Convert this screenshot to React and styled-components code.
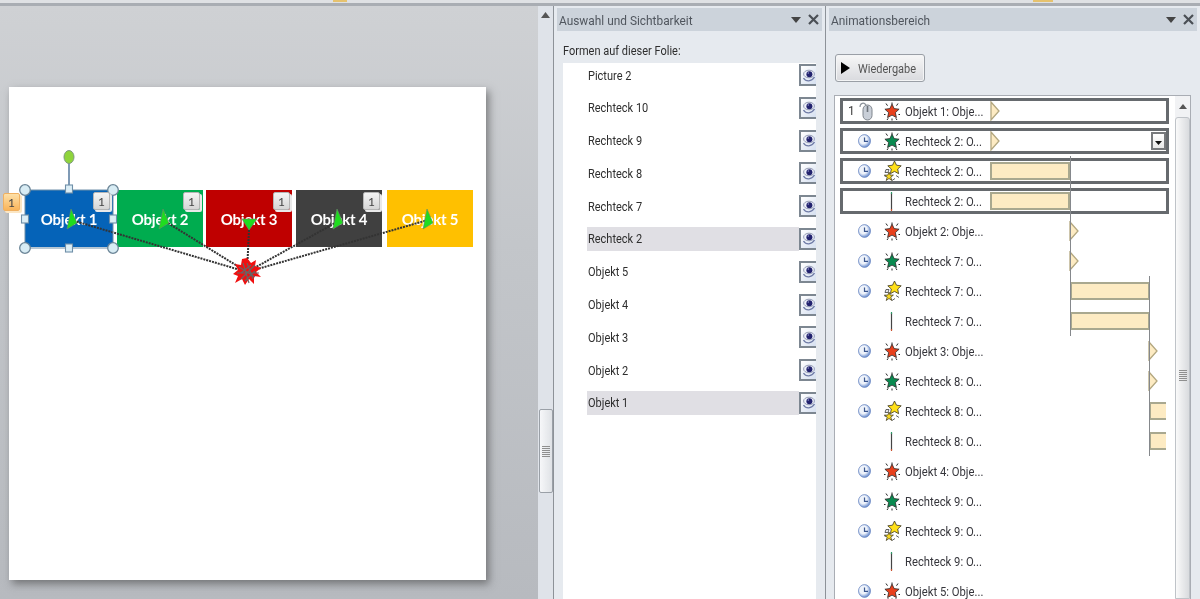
import React from 'react';
import styled, {createGlobalStyle} from 'styled-components';

const GlobalStyle = createGlobalStyle`
  * {
    box-sizing: border-box;
  }
  html, body {
    margin: 0;
    height: 100%;
    overflow: hidden;
    background: #e6eaef;
  }
  #root {
    width: 1200px;
    height: 599px;
  }
`;

const Page = styled.div`
  width: 1200px;
  height: 599px;
  display: flex;
  flex-direction: column;
  overflow: hidden;
  font-family: 'Roboto', 'Liberation Sans', sans-serif;
  color: #3a3a3a;
  filter: blur(0.45px);
`;

// the panes use a tall narrow face, so the text gets squeezed a little
const Narrow = styled.span`
  display: inline-block;
  white-space: nowrap;
  transform: scaleX(${p => p.$scale || 0.88});
  transform-origin: left center;
`;

const TopStrip = styled.div`
  position: relative;
  flex: 0 0 6px;
  background: linear-gradient(#dfe1e4 0, #dfe1e4 3px, #a9adb3 3px, #a9adb3 6px);
`;

const RibbonMark = styled.span`
  position: absolute;
  top: 0;
  left: ${p => p.$left}px;
  width: ${p => p.$width}px;
  height: 2px;
  background: #e6c26e;
`;

const Main = styled.div`
  flex: 1;
  display: flex;
  min-height: 0;
`;

const Workspace = styled.div`
  flex: 0 0 538px;
  padding: 81px 0 0 9px;
  background: linear-gradient(#cfd1d4 0, #c3c6ca 40%, #b7babf 100%);
`;

const Slide = styled.div`
  position: relative;
  width: 477px;
  height: 493px;
  background: #fff;
  box-shadow: 3px 4px 8px rgba(60, 60, 60, 0.55);
`;

const Shape = styled.div`
  position: absolute;
  top: 103px;
  left: ${p => p.$left}px;
  width: ${p => p.$width}px;
  height: 57px;
  display: flex;
  align-items: center;
  justify-content: center;
  background: ${p => p.$color};
  color: #fff;
  font-family: 'Lato', 'Liberation Sans', sans-serif;
  font-weight: 700;
  font-size: 15px;
  letter-spacing: -0.2px;
`;

const Badge = styled.span`
  position: absolute;
  top: ${p => p.$top}px;
  left: ${p => p.$left}px;
  width: 17px;
  height: 18px;
  display: flex;
  align-items: center;
  justify-content: center;
  border-radius: 2px;
  border: 1px solid ${p => (p.$orange ? '#f0b060' : '#b5b5b5')};
  background: ${p =>
    p.$orange
      ? 'linear-gradient(#fde0a8, #f9b45a)'
      : 'linear-gradient(#f4f4f4, #d6d6d6)'};
  box-shadow: 2px 2px 0 ${p => (p.$orange ? '#fbe6c4' : '#e9e9e9')};
  color: #444;
  font-family: 'Lato', 'Liberation Sans', sans-serif;
  font-size: 12px;
`;

const SlideOverlay = styled.svg`
  position: absolute;
  top: 0;
  left: 0;
`;

const ScrollStrip = styled.div`
  flex: 0 0 16px;
  display: flex;
  flex-direction: column;
  align-items: center;
  background: #dfe3e9;
  border-right: 1px solid #8d9298;
`;

const ArrowBtn = styled.div`
  height: 18px;
  display: flex;
  align-items: center;
  justify-content: center;
`;

const StripThumb = styled.div`
  margin-top: 385px;
  width: 14px;
  height: 84px;
  display: flex;
  align-items: center;
  justify-content: center;
  border: 1px solid #9aa0a7;
  border-radius: 2px;
  background: linear-gradient(90deg, #f6f7f9, #dfe2e6);
`;

const Grip = styled.div`
  width: 8px;
  height: 11px;
  background: repeating-linear-gradient(#8f8f8f 0, #8f8f8f 1px, transparent 1px, transparent 2px);
`;

const Pane = styled.section`
  flex: 0 0 ${p => p.$width}px;
  display: flex;
  flex-direction: column;
  min-width: 0;
  background: #e6eaef;
  border-right: ${p => (p.$divided ? '1px solid #8d9298' : 'none')};
`;

const PaneHeader = styled.header`
  flex: 0 0 23px;
  margin: 2px 3px 0 3px;
  padding: 0 3px 0 2px;
  display: flex;
  align-items: center;
  justify-content: space-between;
  background: #ccd3db;
  font-size: 13.5px;
  color: #50565e;
`;

const HeaderActions = styled.div`
  display: flex;
  align-items: center;
  gap: 7px;
`;

const Caption = styled.div`
  height: 32px;
  padding: 11px 0 0 9px;
  font-size: 12.5px;
  color: #2e2e2e;
  line-height: 18px;
`;

const ShapeList = styled.ul`
  flex: 1;
  list-style: none;
  margin: 0 9px;
  padding: 0;
  background: #fff;
`;

const ShapeRow = styled.li`
  height: 24px;
  margin-bottom: 8.8px;
  display: flex;
  align-items: center;
  justify-content: flex-end;
  padding-left: 24px;
`;

const ShapeName = styled.div`
  flex: 1;
  height: 24px;
  display: flex;
  align-items: center;
  padding-left: 1px;
  background: ${p => (p.$selected ? '#e0dfe4' : 'transparent')};
  font-size: 12.5px;
  color: #2e2e2e;
`;

const EyeButton = styled.button`
  flex: 0 0 17px;
  width: 17px;
  height: 22px;
  padding: 0;
  display: flex;
  align-items: center;
  justify-content: center;
  background: linear-gradient(135deg, #fff, #d6e0f0);
  border: 1px solid #7d8791;
  border-width: 2px 0 2px 2px;
`;

const PlayButton = styled.button`
  align-self: flex-start;
  margin: 23px 0 13px 9px;
  width: 90px;
  height: 28px;
  padding: 0 0 0 5px;
  display: flex;
  align-items: center;
  gap: 8px;
  border: 1px solid #9a9fa6;
  border-radius: 3px;
  background: linear-gradient(#f7f7f7, #d9dade);
  box-shadow: inset 0 0 0 1px #f4f5f6;
  font-family: inherit;
  font-size: 12.5px;
  color: #555;
`;

const ListFrame = styled.div`
  position: relative;
  flex: 1;
  min-height: 0;
  margin: 0 9px 0 8px;
  display: flex;
  border: 1px solid #a9adb4;
  border-bottom: none;
  background: #fff;
  overflow: hidden;
`;

const Rows = styled.div`
  flex: 1;
  padding: 2px 0 0 5px;
  min-width: 0;
`;

const AnimRow = styled.div`
  width: 329px;
  height: 26px;
  margin-bottom: 4px;
  display: grid;
  grid-template-columns: 35px 24px 85px 176px;
  grid-template-rows: 20px;
  align-items: center;
  padding-left: 3px;
  border: 3px solid ${p => (p.$selected ? '#666a6e' : 'transparent')};
`;

const Trigger = styled.div`
  display: flex;
  align-items: center;
  gap: 4px;
  padding-left: ${p => (p.$order ? 2 : 12)}px;
  font-size: 12px;
`;

const EffectCell = styled.div`
  display: flex;
  align-items: center;
  height: 20px;
  padding-left: 3px;
`;

const Label = styled.div`
  font-size: 12.8px;
  color: #36363c;
  white-space: nowrap;
`;

const Timeline = styled.div`
  position: relative;
  height: 100%;
  overflow: hidden;
`;

const Bar = styled.div`
  position: absolute;
  top: 1px;
  left: ${p => p.$left}px;
  width: ${p => p.$width}px;
  height: 18px;
  background: #fdebc3;
  border: 2px solid #a9a88f;
  border-right-width: ${p => (p.$clipped ? 0 : 2)}px;
`;

const Chevron = styled.svg`
  position: absolute;
  top: 0;
  left: ${p => p.$left}px;
`;

const RowMenu = styled.div`
  position: absolute;
  top: 1px;
  right: 0;
  width: 15px;
  height: 18px;
  display: flex;
  align-items: flex-end;
  justify-content: center;
  padding-bottom: 3px;
  background: linear-gradient(#fff, #e8e8e8);
  border: 2px solid #77797c;
`;

const GridLine = styled.div`
  position: absolute;
  left: ${p => p.$left}px;
  top: ${p => p.$top}px;
  width: 1px;
  height: 180px;
  background: #85888c;
`;

const ListScroll = styled.div`
  flex: 0 0 15px;
  display: flex;
  flex-direction: column;
  align-items: center;
  background: #f1f2f4;
`;

const ScrollBtn = styled.div`
  width: 100%;
  height: 21px;
  display: flex;
  align-items: center;
  justify-content: center;
`;

const ScrollThumb = styled.div`
  flex: 1;
  width: 100%;
  display: flex;
  justify-content: center;
  padding-top: 252px;
  border: 1px solid #bfc3c8;
  border-radius: 3px 3px 0 0;
  background: linear-gradient(90deg, #fafafa, #d9dbde);
`;

const TRIANGLES = {
  up: 'M0 12H12L6 0Z',
  down: 'M0 0H12L6 12Z',
  right: 'M0 0V12L12 6Z',
};

const Triangle = ({w = 12, h = 7, color = '#444', dir = 'up'}) => (
  <svg width={w} height={h} viewBox="0 0 12 12" preserveAspectRatio="none">
    <path d={TRIANGLES[dir]} fill={color} />
  </svg>
);

const CloseIcon = () => (
  <svg width="11" height="11" viewBox="0 0 11 11">
    <path d="M1 1L10 10M10 1L1 10" stroke="#4a4f55" strokeWidth="2.2" />
  </svg>
);

const EyeIcon = () => (
  <svg width="14" height="15" viewBox="0 0 14 15">
    <path d="M1.5 10c2.5 4 8 4 11-1" fill="none" stroke="#6f7ba6" strokeWidth="1.4" />
    <ellipse cx="7" cy="6" rx="5.4" ry="3.8" fill="#eef1fa" stroke="#5a6488" strokeWidth="0.6" />
    <circle cx="7.4" cy="6.2" r="3" fill="#22226e" />
    <circle cx="6.3" cy="5" r="0.8" fill="#8f94c8" />
  </svg>
);

const ClockIcon = () => (
  <svg width="13" height="14" viewBox="0 0 13 14">
    <defs>
      <radialGradient id="clockDisc" cx="0.4" cy="0.4" r="0.7">
        <stop offset="0.45" stopColor="#eef3fb" />
        <stop offset="1" stopColor="#3f6cc0" />
      </radialGradient>
    </defs>
    <ellipse cx="6.5" cy="7" rx="6" ry="6.4" fill="url(#clockDisc)" stroke="#6f8cc4" strokeWidth="0.8" />
    <path d="M6.5 3.4V7.4H10" fill="none" stroke="#39568f" strokeWidth="1.2" />
  </svg>
);

const MouseIcon = () => (
  <svg width="14" height="19" viewBox="0 0 14 19">
    <path d="M1 5C1 1 5 0 7 3" fill="none" stroke="#8d939b" strokeWidth="1.2" />
    <rect x="4" y="3" width="9" height="15" rx="4.5" fill="#c9cfd8" stroke="#7f858d" strokeWidth="1" />
    <path d="M8.5 4V10" stroke="#6d737b" strokeWidth="1.6" />
  </svg>
);

const STAR = 'M8 1.5L10.1 6.1L15.1 6.7L11.4 10.1L12.4 15.1L8 12.6L3.6 15.1L4.6 10.1L0.9 6.7L5.9 6.1Z';

const SparkStar = ({color}) => (
  <svg width="16" height="19" viewBox="0 0 16 18">
    <path d="M8 0V1.5M2 1L3.5 3.2M14 1L12.5 3.2M0 12H1.5M16 12H14.5M3 17.5L4.2 15.8M13 17.5L11.8 15.8M8 18V16" stroke="#222" strokeWidth="1" />
    <path d={STAR} fill={color} stroke="#2b2b2b" strokeWidth="0.8" />
  </svg>
);

const FlyStars = () => (
  <svg width="18" height="23" viewBox="0 0 18 22">
    <path d="M2 9h3l-1 3h-3zM0 15l2 1M8 20l3-2M12 15l3 2" fill="#ececec" stroke="#555" strokeWidth="0.9" />
    <path d="M10.5 0.5L12.5 4.7L17.2 5.3L13.7 8.5L14.6 13.2L10.5 10.9L6.4 13.2L7.3 8.5L3.8 5.3L8.5 4.7Z" fill="#ffe01a" stroke="#3a3320" strokeWidth="0.8" />
    <path d="M5 11.5L6.2 14.6H9.4L6.8 16.6L7.8 20L5 18L2.2 20L3.2 16.6L0.6 14.6H3.8Z" fill="#f7d820" stroke="#3a3320" strokeWidth="0.7" />
  </svg>
);

const ExitMark = () => (
  <svg width="16" height="19" viewBox="0 0 16 19">
    <path d="M7.5 1V18" stroke="#444" strokeWidth="1.2" />
    <path d="M7.5 0V2" stroke="#2c9a68" strokeWidth="1.2" />
    <path d="M7.5 17V19" stroke="#c8502c" strokeWidth="1.2" />
  </svg>
);

const BarChevron = ({left}) => (
  <Chevron $left={left} width="10" height="20" viewBox="0 0 10 20">
    <path d="M1 1L9 10L1 19Z" fill="#fdebc3" stroke="#b3a77f" strokeWidth="1.3" />
  </Chevron>
);

const SHAPES = [
  {name: 'Objekt 1', left: 16, width: 88, color: '#0563b8'},
  {name: 'Objekt 2', left: 108, width: 86, color: '#00ac4f'},
  {name: 'Objekt 3', left: 197, width: 86, color: '#bf0000'},
  {name: 'Objekt 4', left: 287, width: 86, color: '#404040'},
  {name: 'Objekt 5', left: 378, width: 86, color: '#ffc000'},
];

const LAYER_NAMES = [
  'Picture 2',
  'Rechteck 10',
  'Rechteck 9',
  'Rechteck 8',
  'Rechteck 7',
  'Rechteck 2',
  'Objekt 5',
  'Objekt 4',
  'Objekt 3',
  'Objekt 2',
  'Objekt 1',
];

const BAR_A = {left: 0, width: 80};
const BAR_B = {left: 80, width: 80};
const BAR_C = {left: 159, width: 18, clipped: true};

const ANIM_ROWS = [
  {label: 'Objekt 1: Obje...', fx: 'red', order: 1, chevron: 0, selected: true},
  {label: 'Rechteck 2: O...', fx: 'green', clock: true, chevron: 0, selected: true, menu: true},
  {label: 'Rechteck 2: O...', fx: 'fly', clock: true, bar: BAR_A, selected: true},
  {label: 'Rechteck 2: O...', fx: 'exit', bar: BAR_A, selected: true},
  {label: 'Objekt 2: Obje...', fx: 'red', clock: true, chevron: 79},
  {label: 'Rechteck 7: O...', fx: 'green', clock: true, chevron: 79},
  {label: 'Rechteck 7: O...', fx: 'fly', clock: true, bar: BAR_B},
  {label: 'Rechteck 7: O...', fx: 'exit', bar: BAR_B},
  {label: 'Objekt 3: Obje...', fx: 'red', clock: true, chevron: 158},
  {label: 'Rechteck 8: O...', fx: 'green', clock: true, chevron: 158},
  {label: 'Rechteck 8: O...', fx: 'fly', clock: true, bar: BAR_C},
  {label: 'Rechteck 8: O...', fx: 'exit', bar: BAR_C},
  {label: 'Objekt 4: Obje...', fx: 'red', clock: true},
  {label: 'Rechteck 9: O...', fx: 'green', clock: true},
  {label: 'Rechteck 9: O...', fx: 'fly', clock: true},
  {label: 'Rechteck 9: O...', fx: 'exit'},
  {label: 'Objekt 5: Obje...', fx: 'red', clock: true},
];

const EffectIcon = ({fx}) => {
  if (fx === 'fly') return <FlyStars />;
  if (fx === 'exit') return <ExitMark />;
  return <SparkStar color={fx === 'red' ? '#e8401c' : '#0a8a50'} />;
};

const MotionPaths = () => {
  // coordinates are slide coordinates, this is the drawing on the canvas
  const hub = [238, 185];
  const starts = [[62, 133], [154, 133], [240, 143], [328, 135], [419, 133]];
  const arrows = [
    '62,122 58,142 68,136',
    '154,122 150,142 160,136',
    '233,132 248,132 240,143',
    '328,122 324,142 334,136',
    '418,122 414,142 424,136',
  ];
  return (
    <SlideOverlay width="477" height="493" viewBox="0 0 477 493">
      {starts.map(([x, y]) => (
        <line key={x} x1={x} y1={y} x2={hub[0]} y2={hub[1]} stroke="#333" strokeWidth="2" strokeDasharray="2 1" />
      ))}
      {arrows.map(points => (
        <polygon key={points} points={points} fill="#1fdc1f" stroke="#6a8a6a" strokeWidth="0.6" />
      ))}
      <polygon
        points="238,171 242,176 247,173 246,179 252,181 247,185 252,190 245,189 245,197 240,192 236,198 233,192 226,196 229,189 224,187 229,183 226,177 232,178 233,172"
        fill="#f01010"
      />
      <path d="M230 180L246 190M234 176L240 196M246 178L232 192M228 186H250M238 176L244 192M232 186L242 178M236 194L246 184" stroke="#666" strokeWidth="1.1" fill="none" />
      <path d="M60 76V98" stroke="#7f9ab5" strokeWidth="2" />
      <ellipse cx="60" cy="70" rx="5" ry="6.5" fill="#8fd43c" stroke="#7f9a80" strokeWidth="1" />
      <path d="M16 103H104V161H16Z" fill="none" stroke="#6f8fa8" strokeWidth="1" />
      {[[16, 103], [104, 103], [16, 161], [104, 161]].map(([x, y]) => (
        <circle key={`${x}-${y}`} cx={x} cy={y} r="5.3" fill="#d8ecf4" stroke="#6a8496" strokeWidth="1.3" />
      ))}
      {[[60, 102], [60, 161], [16, 132], [104, 132]].map(([x, y]) => (
        <rect key={`${x}-${y}`} x={x - 3.5} y={y - 4} width="7" height="8" fill="#dceef6" stroke="#6f8fa8" strokeWidth="1.1" />
      ))}
    </SlideOverlay>
  );
};

const PaneActions = () => (
  <HeaderActions>
    <Triangle w={10} h={6} dir="down" />
    <CloseIcon />
  </HeaderActions>
);

const App = () => (
  <Page>
    <GlobalStyle />
    <TopStrip>
      <RibbonMark $left={333} $width={14} />
      <RibbonMark $left={1033} $width={20} />
    </TopStrip>
    <Main>
      <Workspace>
        <Slide>
          {SHAPES.map(shape => (
            <Shape key={shape.name} $left={shape.left} $width={shape.width} $color={shape.color}>
              {shape.name}
            </Shape>
          ))}
          <MotionPaths />
          <Badge $orange $left={-6} $top={106}>1</Badge>
          <Badge $left={84} $top={105}>1</Badge>
          <Badge $left={174} $top={105}>1</Badge>
          <Badge $left={264} $top={105}>1</Badge>
          <Badge $left={354} $top={105}>1</Badge>
        </Slide>
      </Workspace>
      <ScrollStrip>
        <ArrowBtn>
          <Triangle w={9} h={6} color="#555" />
        </ArrowBtn>
        <StripThumb>
          <Grip />
        </StripThumb>
      </ScrollStrip>
      <Pane $width={272} $divided>
        <PaneHeader>
          <Narrow>Auswahl und Sichtbarkeit</Narrow>
          <PaneActions />
        </PaneHeader>
        <Caption>
          <Narrow>Formen auf dieser Folie:</Narrow>
        </Caption>
        <ShapeList>
          {LAYER_NAMES.map(name => (
            <ShapeRow key={name}>
              <ShapeName $selected={name === 'Rechteck 2' || name === 'Objekt 1'}>
                <Narrow>{name}</Narrow>
              </ShapeName>
              <EyeButton aria-label="Sichtbarkeit">
                <EyeIcon />
              </EyeButton>
            </ShapeRow>
          ))}
        </ShapeList>
      </Pane>
      <Pane $width={374}>
        <PaneHeader>
          <Narrow>Animationsbereich</Narrow>
          <PaneActions />
        </PaneHeader>
        <PlayButton>
          <Triangle w={12} h={12} color="#000" dir="right" />
          <Narrow>Wiedergabe</Narrow>
        </PlayButton>
        <ListFrame>
          <Rows>
            {ANIM_ROWS.map((row, i) => (
              <AnimRow key={i} $selected={row.selected}>
                <Trigger $order={row.order}>
                  {row.order}
                  {row.order && <MouseIcon />}
                  {row.clock && <ClockIcon />}
                </Trigger>
                <EffectCell>
                  <EffectIcon fx={row.fx} />
                </EffectCell>
                <Label>
                  <Narrow>{row.label}</Narrow>
                </Label>
                <Timeline>
                  {row.chevron !== undefined && <BarChevron left={row.chevron} />}
                  {row.bar && <Bar $left={row.bar.left} $width={row.bar.width} $clipped={row.bar.clipped} />}
                  {row.menu && (
                    <RowMenu>
                      <Triangle w={7} h={4} color="#111" dir="down" />
                    </RowMenu>
                  )}
                </Timeline>
              </AnimRow>
            ))}
          </Rows>
          <GridLine $left={235} $top={60} />
          <GridLine $left={314} $top={180} />
          <ListScroll>
            <ScrollBtn>
              <Triangle w={8} h={5} color="#555" />
            </ScrollBtn>
            <ScrollThumb>
              <Grip />
            </ScrollThumb>
          </ListScroll>
        </ListFrame>
      </Pane>
    </Main>
  </Page>
);

export default App;
